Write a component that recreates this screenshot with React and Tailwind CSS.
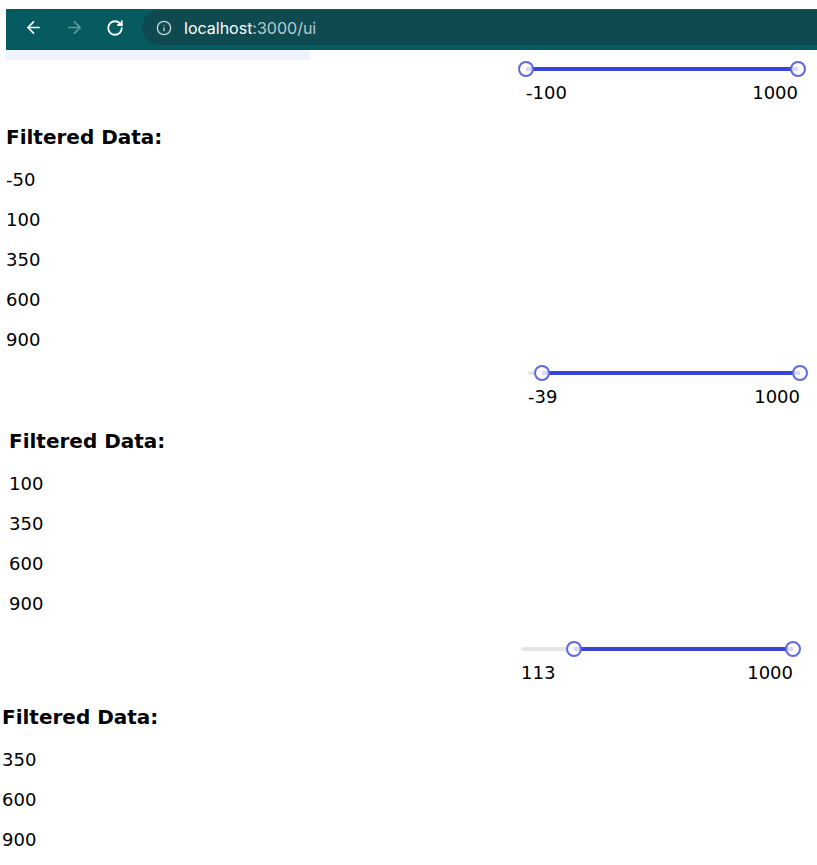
import React from 'react';
import { ArrowLeft, ArrowRight, RotateCw, Info } from 'lucide-react';

const font = { fontFamily: '"DejaVu Sans", "Noto Sans", sans-serif' };
const barFont = { fontFamily: 'Inter, "Noto Sans", sans-serif' };

const RangeSlider = ({ from, to, min, max, low, high }) => {
  const pct = (v) => ((v - min) / (max - min)) * 100;
  return (
    <div className="w-[272px]">
      <div className="relative h-4">
        <div className="absolute left-0 right-0 top-[6px] h-1 rounded-full bg-[#e6e6e6]" />
        <div
          className="absolute top-[6px] h-1 bg-[#3a43da]"
          style={{ left: `${pct(low)}%`, width: `${pct(high) - pct(low)}%` }}
        />
        {[low, high].map((v, i) => (
          <div
            key={i}
            className="absolute top-0 -ml-2 h-4 w-4 rounded-full border-2 border-[#5d68e2] bg-white/80"
            style={{ left: `${pct(v)}%` }}
          />
        ))}
      </div>
      <div className="mt-1 flex justify-between text-[18px] leading-6 text-black">
        <span>{from}</span>
        <span>{to}</span>
      </div>
    </div>
  );
};

const Section = ({ left, right, top, slider, items }) => {
  return (
    <div className={left}>
      <div className={`flex justify-end ${right} ${top}`}>
        <RangeSlider {...slider} />
      </div>
      <h2 className="mt-[18px] text-[20px] font-bold leading-7 text-black">Filtered Data:</h2>
      <div className="mt-[9px]">
        {items.map((item) => (
          <div key={item} className="text-[18px] leading-10 text-black">
            {item}
          </div>
        ))}
      </div>
    </div>
  );
};

const App = () => {
  return (
    <div className="min-h-[865px] w-[817px] overflow-hidden bg-white" style={font}>
      <div className="pt-[9px] pl-[6px]" style={barFont}>
        <div className="flex h-[41px] items-start bg-[#065b60]">
          <div className="flex h-9 items-center gap-[22px] pl-[18px] pr-[18px] pt-px">
            <ArrowLeft size={19} strokeWidth={2.2} className="text-white" />
            <ArrowRight size={19} strokeWidth={2.2} className="text-[#5f9a9d]" />
            <RotateCw size={18} strokeWidth={2.4} className="text-white" />
          </div>
          <div className="mt-px flex h-[35px] flex-1 items-center gap-[12px] rounded-l-full bg-[#0f4a50] pl-[14px]">
            <Info size={16} strokeWidth={2} className="text-[#c4d2d3]" />
            <span className="text-[16px] text-white">
              localhost<span className="text-[#b9cbcc]">:3000/ui</span>
            </span>
          </div>
        </div>
        <div className="h-[10px] w-[304px] bg-[#eef3fe]" />
      </div>

      <Section
        left="pl-[6px]"
        right="pr-[19px]"
        top="mt-px"
        slider={{ from: '-100', to: '1000', min: -100, max: 1000, low: -100, high: 1000 }}
        items={['-50', '100', '350', '600', '900']}
      />
      <Section
        left="pl-[9px]"
        right="pr-[17px]"
        top="mt-[5px]"
        slider={{ from: '-39', to: '1000', min: -100, max: 1000, low: -44, high: 1000 }}
        items={['100', '350', '600', '900']}
      />
      <Section
        left="pl-[2px]"
        right="pr-[24px]"
        top="mt-[17px]"
        slider={{ from: '113', to: '1000', min: -100, max: 1000, low: 113, high: 1000 }}
        items={['350', '600', '900']}
      />
    </div>
  );
};

export default App;
